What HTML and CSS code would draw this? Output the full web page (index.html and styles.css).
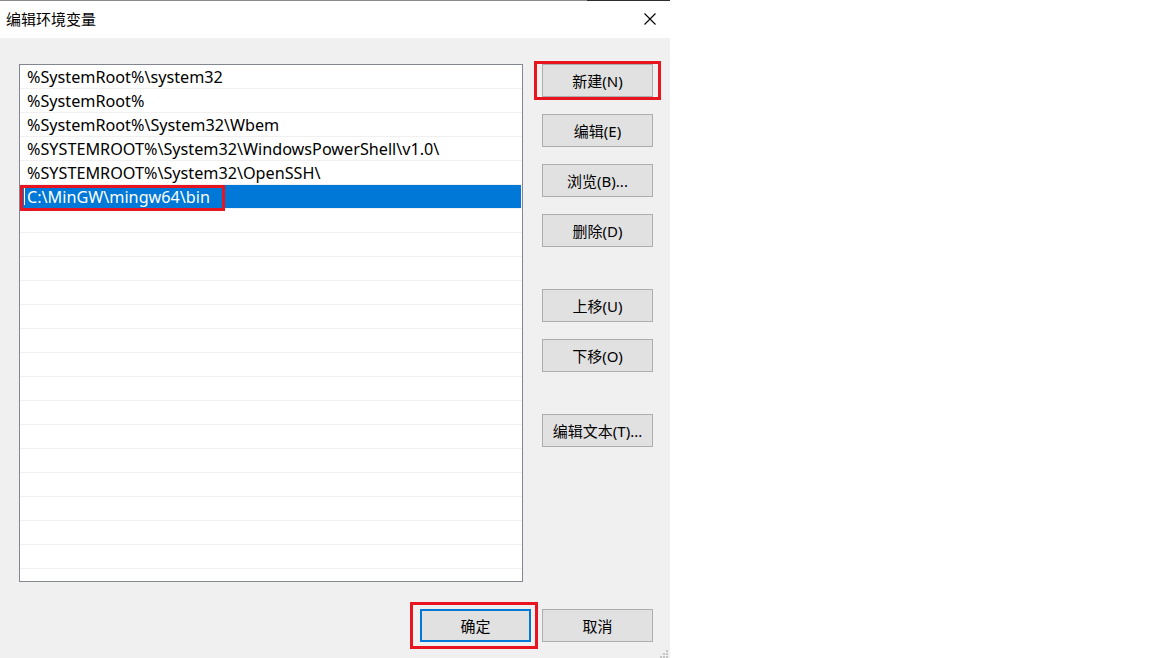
FILE: index.html
```html
<!DOCTYPE html>
<html lang="zh-CN">
<head>
<meta charset="utf-8">
<title>编辑环境变量</title>
<link rel="stylesheet" href="styles.css">
</head>
<body>
<div class="dialog">
  <div class="titlebar">
    <span class="title">编辑环境变量</span>
    <svg class="close" width="12" height="12" viewBox="0 0 12 12"><path d="M0.5 0.5 L11.5 11.5 M11.5 0.5 L0.5 11.5" stroke="#000" stroke-width="1.1" fill="none"/></svg>
  </div>
  <div class="content">
    <div class="main">
      <div class="list">
        <div class="row">%SystemRoot%\system32</div>
        <div class="row">%SystemRoot%</div>
        <div class="row">%SystemRoot%\System32\Wbem</div>
        <div class="row">%SYSTEMROOT%\System32\WindowsPowerShell\v1.0\</div>
        <div class="row">%SYSTEMROOT%\System32\OpenSSH\</div>
        <div class="row selected"><span class="caret"></span>C:\MinGW\mingw64\bin<span class="mark mark-item"></span></div>
        <div class="row"></div><div class="row"></div><div class="row"></div><div class="row"></div>
        <div class="row"></div><div class="row"></div><div class="row"></div><div class="row"></div>
        <div class="row"></div><div class="row"></div><div class="row"></div><div class="row"></div>
        <div class="row"></div><div class="row"></div><div class="row"></div><div class="row"></div>
      </div>
      <div class="buttons">
        <button class="btn">新建(N)<span class="mark mark-new"></span></button>
        <button class="btn">编辑(E)</button>
        <button class="btn">浏览(B)...</button>
        <button class="btn">删除(D)</button>
        <button class="btn spaced">上移(U)</button>
        <button class="btn">下移(O)</button>
        <button class="btn spaced">编辑文本(T)...</button>
      </div>
    </div>
    <div class="footer">
      <button class="btn default">确定<span class="mark mark-ok"></span></button>
      <button class="btn">取消</button>
    </div>
    <svg class="grip" width="8" height="8" viewBox="0 0 8 8">
      <rect x="6" y="0" width="2" height="2" fill="#c4c4c4"/>
      <rect x="3" y="3" width="2" height="2" fill="#c4c4c4"/>
      <rect x="6" y="3" width="2" height="2" fill="#c4c4c4"/>
      <rect x="0" y="6" width="2" height="2" fill="#c4c4c4"/>
      <rect x="3" y="6" width="2" height="2" fill="#c4c4c4"/>
      <rect x="6" y="6" width="2" height="2" fill="#c4c4c4"/>
    </svg>
  </div>
</div>
</body>
</html>
```
FILE: styles.css
```css
* { box-sizing: border-box; }
html, body { margin: 0; padding: 0; background: #ffffff; }
body {
  font-family: "Noto Sans", "Noto Sans CJK SC", sans-serif;
  font-size: 15px;
  color: #000;
  width: 1152px;
  height: 658px;
  overflow: hidden;
}
.dialog {
  width: 670px;
  height: 658px;
  background: #f0f0f0;
  display: flex;
  flex-direction: column;
}
.titlebar {
  height: 38px;
  background: #fff;
  border-top: 1px solid #8a8a8a;
  display: flex;
  align-items: center;
  justify-content: space-between;
  padding: 0 14px 0 6px;
  position: relative;
}
.titlebar::after {
  content: "";
  position: absolute;
  top: -1px;
  left: 587px;
  right: 0;
  height: 1px;
  background: #2e2e2e;
}
.title {
  font-family: "Noto Sans CJK SC", sans-serif;
  font-size: 15px;
  line-height: 20px;
  margin-top: -2px;
}
.close { display: block; margin-top: -1px; }
.content {
  flex: 1;
  display: flex;
  flex-direction: column;
  position: relative;
}
.main {
  display: flex;
  padding: 26px 0 0 19px;
}
.list {
  width: 504px;
  height: 518px;
  border: 1px solid #828790;
  background: #fff;
  overflow: hidden;
}
.row {
  height: 24px;
  border-bottom: 1px solid #f0f0f0;
  padding-left: 7px;
  font-size: 16.2px;
  line-height: 24px;
  white-space: nowrap;
  position: relative;
}
.row.selected {
  background: #0078d7;
  color: #fff;
  margin-right: 1px;
}
.caret {
  position: absolute;
  left: 4px;
  top: 3px;
  width: 1px;
  height: 17px;
  background: #fff;
}
.buttons {
  display: flex;
  flex-direction: column;
  gap: 17px;
  margin-left: 19px;
}
.btn {
  width: 111px;
  height: 33px;
  background: #e1e1e1;
  border: 1px solid #adadad;
  font-family: "Noto Sans", "Noto Sans CJK SC", sans-serif;
  font-size: 15px;
  color: #000;
  padding: 0;
  position: relative;
  line-height: 20px;
}
.btn.spaced { margin-top: 25px; }
.btn.default { border: 2px solid #0078d7; }
.footer {
  display: flex;
  justify-content: flex-end;
  gap: 11px;
  padding: 27px 17px 0 0;
}
.mark {
  position: absolute;
  border: 3px solid #e8141f;
  pointer-events: none;
}
.mark-new { left: -9px; top: -4px; width: 127px; height: 39px; }
.mark-ok { left: -12px; top: -9px; width: 128px; height: 47px; }
.mark-item { left: 0; top: 0; width: 205px; height: 26px; border-width: 3px; }
.grip {
  position: absolute;
  right: 2px;
  bottom: 0;
}
```
